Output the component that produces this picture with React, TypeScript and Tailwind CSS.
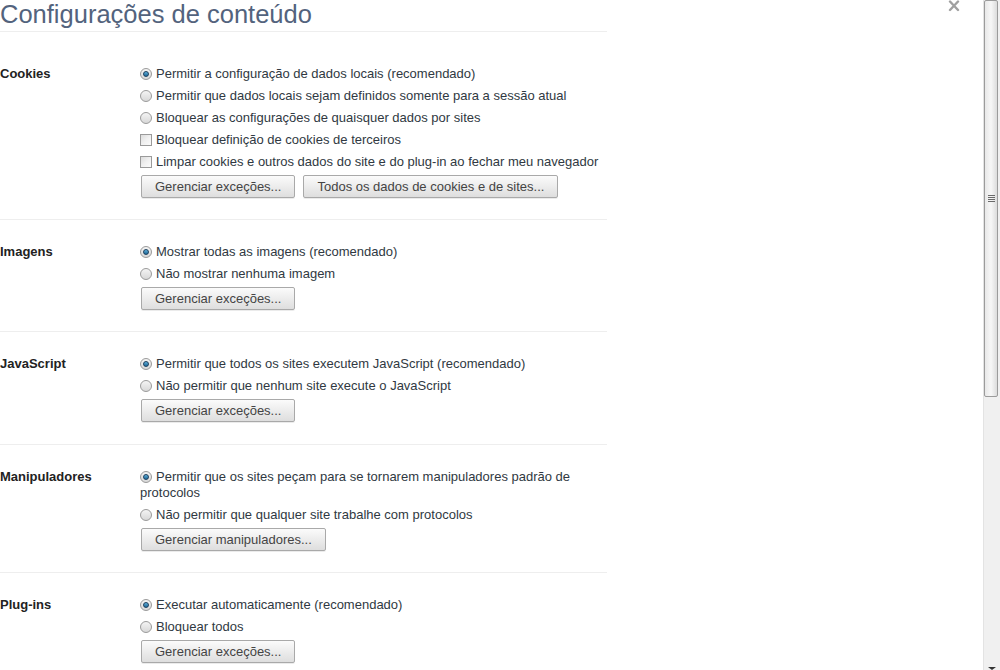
import React from "react";

function Radio({ checked }: { checked?: boolean }) {
  return (
    <span className="relative mr-[4px] inline-block h-[12px] w-[12px] translate-y-[1px] rounded-full border border-[#9a9a9a] bg-gradient-to-b from-[#f4f4f4] to-[#d8d8d8] align-[-1px]">
      {checked && (
        <span className="absolute left-[2px] top-[2px] h-[6px] w-[6px] rounded-full border border-[#1b3f5e] bg-gradient-to-b from-[#5fb0da] to-[#1d6a9a]" />
      )}
    </span>
  );
}

function Check() {
  return (
    <span className="mr-[4px] inline-block h-[12px] w-[12px] translate-y-[1px] border border-[#9a9a9a] bg-gradient-to-br from-[#dcdcdc] via-[#f0f0f0] to-[#fbfbfb] align-[-1px]" />
  );
}

function Btn({ children }: { children: React.ReactNode }) {
  return (
    <button className="h-[23px] rounded-[2px] border border-[#a9a9a9] bg-gradient-to-b from-[#fbfbfb] to-[#dedede] px-[13px] text-[13px] leading-[21px] text-[#444] shadow-[0_1px_0_rgba(0,0,0,0.08)]">
      {children}
    </button>
  );
}

type Item = { type: "radio" | "check"; checked?: boolean; text: string };

function Section({
  label,
  items,
  buttons,
  first,
  last,
  extra,
}: {
  label: string;
  items: Item[];
  buttons: string[];
  first?: boolean;
  last?: boolean;
  extra?: boolean;
}) {
  return (
    <div
      className={
        "flex " +
        (extra ? "pb-[22px] " : "pb-[21px] ") +
        (first ? "pt-[30px] " : "pt-[20px] ") +
        (last ? "" : "border-b border-[#eeeeee]")
      }
    >
      <div className="w-[140px] shrink-0 pb-[2px] pt-[4px] text-[13px] font-bold leading-[16px] text-[#222]">
        {label}
      </div>
      <div className="min-w-0 flex-1">
        {items.map((it, i) => (
          <div key={i} className="pb-[2px] pt-[4px] leading-[16px] text-[#303942]">
            {it.type === "radio" ? <Radio checked={it.checked} /> : <Check />}
            {it.text}
          </div>
        ))}
        <div className="mt-[3px] flex gap-[8px] pl-[1px]">
          {buttons.map((b) => (
            <Btn key={b}>{b}</Btn>
          ))}
        </div>
      </div>
    </div>
  );
}

export default function App() {
  return (
    <div className="flex h-[670px] w-[1000px] overflow-hidden bg-white font-['Liberation_Sans',Arial,sans-serif] text-[13px]">
      <div className="relative min-w-0 flex-1">
        <div className="w-[607px]">
          <h1 className="border-b border-[#eeeeee] pb-[3px] text-[25.5px] font-normal leading-[28px] text-[#53637d]">
            Configurações de conteúdo
          </h1>
          <Section
            first
            label="Cookies"
            items={[
              { type: "radio", checked: true, text: "Permitir a configuração de dados locais (recomendado)" },
              { type: "radio", text: "Permitir que dados locais sejam definidos somente para a sessão atual" },
              { type: "radio", text: "Bloquear as configurações de quaisquer dados por sites" },
              { type: "check", text: "Bloquear definição de cookies de terceiros" },
              { type: "check", text: "Limpar cookies e outros dados do site e do plug-in ao fechar meu navegador" },
            ]}
            buttons={["Gerenciar exceções...", "Todos os dados de cookies e de sites..."]}
          />
          <Section
            label="Imagens"
            items={[
              { type: "radio", checked: true, text: "Mostrar todas as imagens (recomendado)" },
              { type: "radio", text: "Não mostrar nenhuma imagem" },
            ]}
            buttons={["Gerenciar exceções..."]}
          />
          <Section
            extra
            label="JavaScript"
            items={[
              { type: "radio", checked: true, text: "Permitir que todos os sites executem JavaScript (recomendado)" },
              { type: "radio", text: "Não permitir que nenhum site execute o JavaScript" },
            ]}
            buttons={["Gerenciar exceções..."]}
          />
          <Section
            label="Manipuladores"
            items={[
              {
                type: "radio",
                checked: true,
                text: "Permitir que os sites peçam para se tornarem manipuladores padrão de protocolos",
              },
              { type: "radio", text: "Não permitir que qualquer site trabalhe com protocolos" },
            ]}
            buttons={["Gerenciar manipuladores..."]}
          />
          <Section
            last
            label="Plug-ins"
            items={[
              { type: "radio", checked: true, text: "Executar automaticamente (recomendado)" },
              { type: "radio", text: "Bloquear todos" },
            ]}
            buttons={["Gerenciar exceções..."]}
          />
        </div>
        <svg
          className="absolute left-[948px] top-[0px]"
          width="12"
          height="12"
          viewBox="0 0 12 12"
        >
          <path d="M2 1.5 L10 10 M10 1.5 L2 10" stroke="#a0a0a0" strokeWidth="2.4" strokeLinecap="round" />
        </svg>
      </div>
      <div className="flex w-[17px] shrink-0 flex-col border-l border-[#e3e3e3] bg-[#f0f0f0]">
        <div className="relative mr-[2px] h-[397px] rounded-[2px] border border-[#9b9b9b] bg-gradient-to-r from-[#e8e8e8] via-[#f7f7f7] to-[#dcdcdc]">
          <div className="absolute left-[3px] top-[194px] flex w-[7px] flex-col gap-[1px]">
            <span className="h-[1px] bg-[#6a6a6a]" />
            <span className="h-[1px] bg-[#6a6a6a]" />
            <span className="h-[1px] bg-[#6a6a6a]" />
            <span className="h-[1px] bg-[#6a6a6a]" />
          </div>
        </div>
        <div className="flex-1" />
        <div className="flex h-[4px] justify-center">
          <span className="mt-[1px] h-0 w-0 border-x-[4px] border-t-[3px] border-x-transparent border-t-[#333]" />
        </div>
      </div>
    </div>
  );
}
